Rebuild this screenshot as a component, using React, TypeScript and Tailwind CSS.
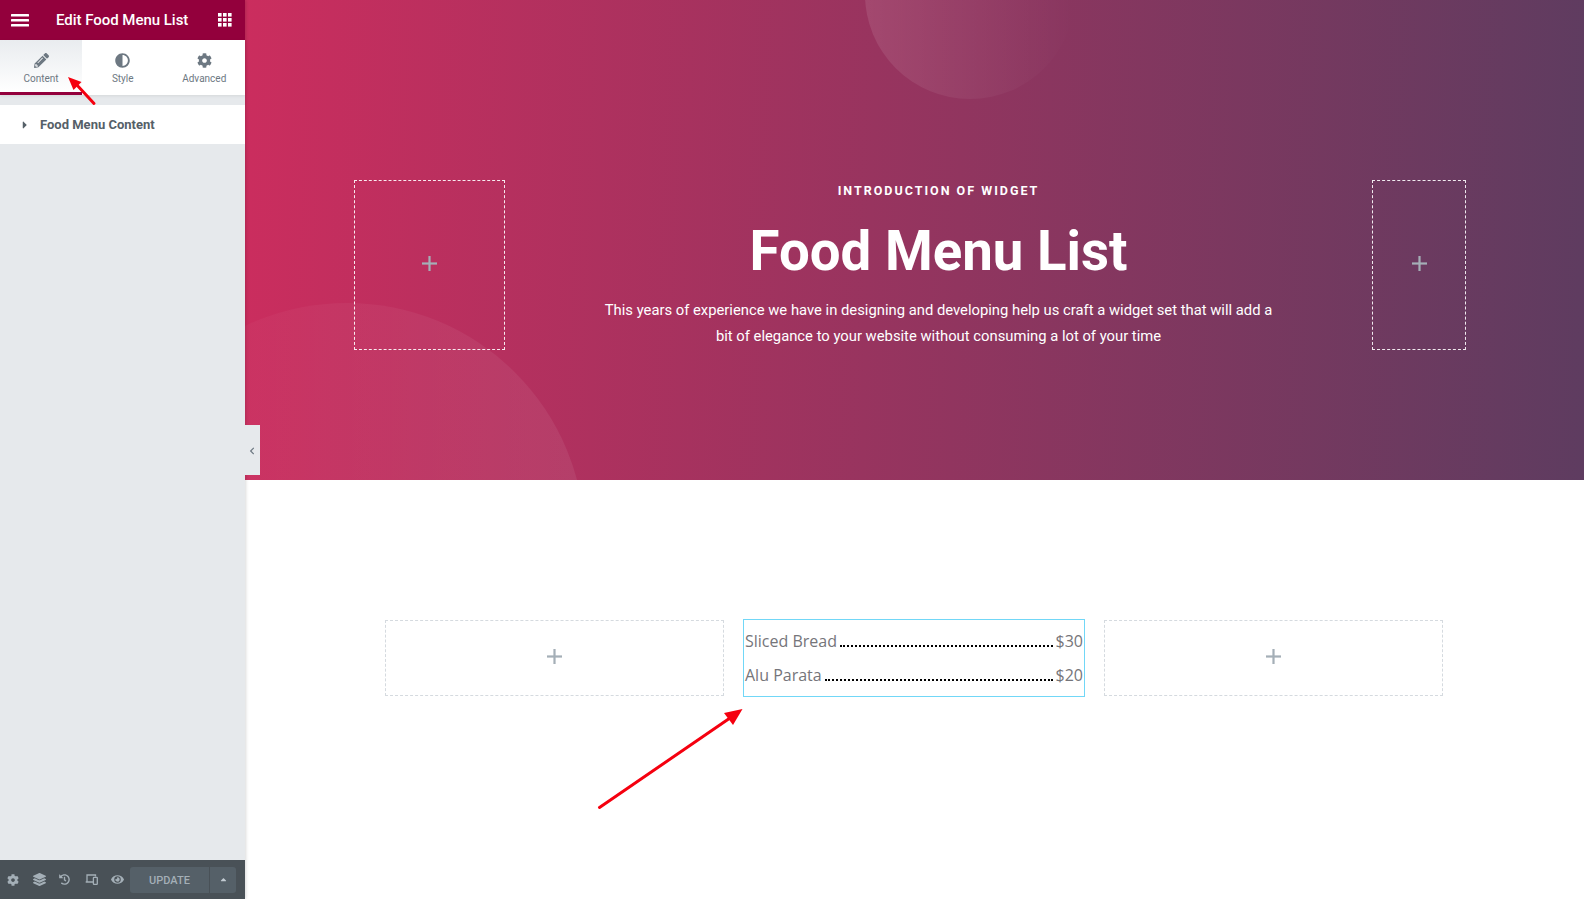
import React from "react";
import { FaPencilAlt, FaAdjust, FaCog, FaCaretRight, FaCaretUp, FaLayerGroup, FaHistory, FaEye, FaChevronLeft } from "react-icons/fa";

function Plus({ color = "#a4afb7" }: { color?: string }) {
  return (
    <svg width="15" height="15" viewBox="0 0 15 15" aria-hidden="true">
      <rect x="6.4" y="0" width="2.2" height="15" fill={color} />
      <rect x="0" y="6.4" width="15" height="2.2" fill={color} />
    </svg>
  );
}

function Tab({ icon, label, active }: { icon: React.ReactNode; label: string; active?: boolean }) {
  return (
    <div
      className={
        active
          ? "w-[82px] h-[55px] flex flex-col items-center pt-[12px] border-b-[3px] border-[#93003c] bg-gradient-to-b from-[#e9ecef] to-white"
          : "flex-1 h-[55px] flex flex-col items-center pt-[12px] bg-white"
      }
    >
      <div className="h-[16px] flex items-center text-[#6d7882] text-[15px]">{icon}</div>
      <div className="mt-[4px] text-[10px] leading-[14px] text-[#6d7882]">{label}</div>
    </div>
  );
}

function MenuRow({ name, price }: { name: string; price: string }) {
  return (
    <div className="flex items-baseline h-[34px] text-[#75757a] text-[16px] leading-[34px] font-['Open_Sans',sans-serif]">
      <span>{name}</span>
      <span className="flex-1 mx-[3px] border-b-2 border-dotted border-black" />
      <span>{price}</span>
    </div>
  );
}

function DevicesIcon() {
  return (
    <svg width="13" height="11" viewBox="0 0 13 11" fill="none" stroke="#a4afb7" strokeWidth="1.3" aria-hidden="true">
      <path d="M8 8H.7M2 8V1h8.5v1.6" />
      <rect x="8.4" y="3.4" width="3.9" height="6.9" rx=".6" />
    </svg>
  );
}

function GridIcon() {
  return (
    <svg width="14" height="14" viewBox="0 0 14 14" fill="white" aria-hidden="true">
      {[0, 5, 10].map((y) =>
        [0, 5, 10].map((x) => <rect key={`${x}-${y}`} x={x} y={y} width="3.6" height="3.6" />)
      )}
    </svg>
  );
}

function MenuIcon() {
  return (
    <svg width="18" height="13" viewBox="0 0 18 13" fill="white" aria-hidden="true">
      <rect x="0" y="0" width="18" height="2.6" rx=".5" />
      <rect x="0" y="5" width="18" height="2.6" rx=".5" />
      <rect x="0" y="10" width="18" height="2.6" rx=".5" />
    </svg>
  );
}

export default function App() {
  return (
    <div className="relative w-full h-[899px] flex overflow-hidden bg-white font-['Roboto',sans-serif]">
      <aside className="w-[245px] shrink-0 h-full flex flex-col bg-[#e6e9ec] shadow-[1px_0_3px_rgba(0,0,0,0.15)] z-10">
        <header className="h-[40px] shrink-0 bg-[#93003c] flex items-center pl-[11px] text-white">
          <MenuIcon />
          <span className="ml-[27px] w-[133px] text-[15px] font-medium leading-[40px] tracking-[-0.03px]">Edit Food Menu List</span>
          <span className="ml-[29px] flex"><GridIcon /></span>
        </header>
        <div className="h-[55px] shrink-0 flex bg-white shadow-[0_1px_3px_rgba(0,0,0,0.08)]">
          <Tab icon={<FaPencilAlt />} label="Content" active />
          <Tab icon={<FaAdjust />} label="Style" />
          <Tab icon={<FaCog />} label="Advanced" />
        </div>
        <div className="mt-[10px] h-[39px] shrink-0 bg-white flex items-center pl-[19px] pt-[1px] text-[#556068]">
          <FaCaretRight className="text-[12px]" />
          <span className="ml-[9px] text-[13px] font-bold text-[#556068]">Food Menu Content</span>
        </div>
        <div className="flex-1" />
        <footer className="h-[39px] shrink-0 bg-[#495157] flex items-center pl-[7px] text-[#a4afb7]">
          <div className="w-[26px] flex"><FaCog className="text-[12px]" /></div>
          <div className="w-[26px] flex"><FaLayerGroup className="text-[13px]" /></div>
          <div className="w-[26px] flex"><FaHistory className="text-[11px]" /></div>
          <div className="w-[26px] flex"><DevicesIcon /></div>
          <div className="w-[19px] flex"><FaEye className="text-[13px]" /></div>
          <div className="w-[106px] h-[26px] flex rounded-[3px] bg-[#556068] text-[11px] leading-[26px] font-medium">
            <div className="w-[80px] pt-[1px] text-center border-r border-[#495157] text-[#a4afb7]">UPDATE</div>
            <div className="flex-1 flex items-center justify-center"><FaCaretUp className="text-[9px] text-[#c2cbd2]" /></div>
          </div>
        </footer>
      </aside>

      <main className="flex-1 min-w-0 flex flex-col">
        <section className="relative h-[480px] shrink-0 overflow-hidden bg-[linear-gradient(92deg,#cb2d5e_0%,#5e3c60_100%)]">
          <div className="absolute left-[620px] top-[-111px] w-[210px] h-[210px] rounded-full bg-gradient-to-r from-white/[0.1] to-white/0" />
          <div className="absolute left-[-136px] top-[303px] w-[476px] h-[476px] rounded-full bg-gradient-to-r from-white/[0.01] to-white/[0.07]" />
          <div className="relative flex items-start pt-[180px] pl-[109px] pr-[118px]">
            <div className="w-[151px] h-[170px] pb-[2.5px] border border-dashed border-white/90 flex items-center justify-center">
              <Plus />
            </div>
            <div className="flex-1 flex flex-col items-center text-white text-center">
              <div className="mt-[1px] text-[12.5px] leading-[20px] font-bold tracking-[2px]">INTRODUCTION OF WIDGET</div>
              <h1 className="mt-[19px] text-[54.6px] leading-[62px] font-bold">Food Menu List</h1>
              <p className="mt-[15px] w-[680px] text-[14.8px] leading-[26px] font-normal">
                This years of experience we have in designing and developing help us craft a widget set that will add a bit of elegance to your website without consuming a lot of your time
              </p>
            </div>
            <div className="w-[94px] h-[170px] pb-[2.5px] border border-dashed border-white/90 flex items-center justify-center">
              <Plus />
            </div>
          </div>
        </section>
        <section className="flex items-center pl-[140px] pt-[139px]">
          <div className="w-[339px] h-[76px] pb-[3px] border border-dashed border-[#d5dadf] flex items-center justify-center">
            <Plus />
          </div>
          <div className="ml-[19px] w-[342px] h-[78px] border border-[#71d7f7] px-px pt-[4px]">
            <MenuRow name="Sliced Bread" price="$30" />
            <MenuRow name="Alu Parata" price="$20" />
          </div>
          <div className="ml-[19px] w-[339px] h-[76px] pb-[3px] border border-dashed border-[#d5dadf] flex items-center justify-center">
            <Plus />
          </div>
        </section>
      </main>

      <div className="absolute left-[245px] top-[425px] w-[15px] h-[50px] pr-[2px] pt-[1px] bg-[#e6e9ec] flex items-center justify-center text-[#6d7882] z-10">
        <FaChevronLeft className="text-[8px]" />
      </div>

      <svg className="absolute left-[60px] top-[70px] z-20" width="40" height="40" viewBox="0 0 40 40" aria-hidden="true">
        <path d="M34 33.5 L16 14" stroke="#f5000f" strokeWidth="3" strokeLinecap="round" />
        <path d="M8 7 L21.5 12 L13.5 20 Z" fill="#f5000f" />
      </svg>
      <svg className="absolute left-[590px] top-[700px] z-20" width="160" height="115" viewBox="0 0 160 115" aria-hidden="true">
        <path d="M9.5 107.5 L140 18" stroke="#f5000f" strokeWidth="3" strokeLinecap="round" />
        <path d="M152.5 9 L143 25 L134 13 Z" fill="#f5000f" />
      </svg>
    </div>
  );
}
